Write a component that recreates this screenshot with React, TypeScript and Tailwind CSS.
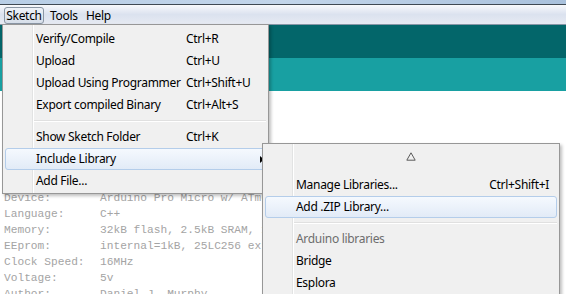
import React from "react";

type Item = { label: string; shortcut?: string; active?: boolean; sep?: boolean; arrow?: boolean; muted?: boolean };

const sketchItems: Item[] = [
  { label: "Verify/Compile", shortcut: "Ctrl+R" },
  { label: "Upload", shortcut: "Ctrl+U" },
  { label: "Upload Using Programmer", shortcut: "Ctrl+Shift+U" },
  { label: "Export compiled Binary", shortcut: "Ctrl+Alt+S" },
  { label: "", sep: true },
  { label: "Show Sketch Folder", shortcut: "Ctrl+K" },
  { label: "Include Library", active: true, arrow: true },
  { label: "Add File..." },
];

const libraryItems: Item[] = [
  { label: "Manage Libraries...", shortcut: "Ctrl+Shift+I" },
  { label: "Add .ZIP Library...", active: true },
  { label: "", sep: true },
  { label: "Arduino libraries", muted: true },
  { label: "Bridge" },
  { label: "Esplora" },
];

const details = [
  ["Device:", "Arduino Pro Micro w/ ATmega32U4"],
  ["Language:", "C++"],
  ["Memory:", "32kB flash, 2.5kB SRAM, 1kB EEPROM"],
  ["EEprom:", "internal=1kB, 25LC256 external"],
  ["Clock Speed:", "16MHz"],
  ["Voltage:", "5v"],
  ["Author:", "Daniel J. Murphy"],
];

function MenuRow({ item, shortcutCol }: { item: Item; shortcutCol: boolean }) {
  if (item.sep) {
    return (
      <div className="flex h-[10px] items-center pl-[30px] pr-[2px]">
        <div className="h-[2px] w-full border-t border-b border-t-[#e0e0e0] border-b-white" />
      </div>
    );
  }
  return (
    <div
      className={`relative mx-[2px] flex h-[22px] items-center rounded-[3px] border ${
        item.active
          ? "border-[#b4cdea] bg-gradient-to-b from-[#f5f9fe] to-[#e2ebf7]"
          : "border-transparent"
      }`}
    >
      <span
        className={`pl-[30px] whitespace-nowrap ${shortcutCol ? "w-[180px] shrink-0" : "flex-1"} ${
          item.muted ? "text-[#6d6d6d]" : "text-black"
        }`}
      >
        {item.label}
      </span>
      {item.shortcut && (
        <span className={`whitespace-nowrap ${shortcutCol ? "" : "pr-[7px]"}`}>{item.shortcut}</span>
      )}
      {item.arrow && (
        <svg className="absolute right-[1px] top-[7px]" width="4" height="7" viewBox="0 0 4 7">
          <path d="M0 0 L4 3.5 L0 7 Z" fill="#000" />
        </svg>
      )}
    </div>
  );
}

function Gutter() {
  return <div className="absolute left-[29px] top-0 bottom-0 w-[2px] border-l border-r border-l-[#e2e3e3] border-r-white" />;
}

export default function App() {
  return (
    <div
      className="relative h-[294px] w-[566px] overflow-hidden bg-white text-[12px] tracking-[-0.3px] text-black"
      style={{ fontFamily: '"Noto Sans", "Open Sans", sans-serif' }}
    >
      {/* window chrome */}
      <div className="h-[4px] bg-gradient-to-r from-[#b8cee6] via-[#c2d5ea] to-[#a9c1dc]" />
      <div className="h-[1px] bg-[#3f4953]" />
      <div className="flex h-[20px] items-start border-b border-[#8796a6] bg-gradient-to-b from-[#f8f9fc] via-[#dbe2ef] to-[#e6eaf2] pl-[4px]">
        <div className="mt-[2px] flex h-[17px] w-[40px] items-center justify-center rounded-[3px] border border-[#8a96a4] bg-gradient-to-b from-[#eef2f8] to-[#d6dee9]">
          Sketch
        </div>
        <div className="mt-[2px] ml-[6px] flex h-[17px] w-[36px] items-center">Tools</div>
        <div className="mt-[2px] flex h-[17px] items-center">Help</div>
      </div>

      {/* toolbar bands */}
      <div className="h-[33px] bg-[#03666a]" />
      <div className="h-[33px] bg-[#18a0a2]" />

      {/* sketch description */}
      <div
        className="flex flex-col pl-[4px] pt-[99px] text-[11.2px] leading-[16px] tracking-normal text-[#a4a4a4]"
        style={{ fontFamily: '"Liberation Mono", monospace' }}
      >
        {details.map(([k, v]) => (
          <div key={k} className="flex whitespace-nowrap">
            <span className="w-[96px] shrink-0">{k}</span>
            <span>{v}</span>
          </div>
        ))}
      </div>

      {/* Sketch menu */}
      <div className="absolute left-[2px] top-[24px] w-[267px] border border-[#979797] bg-[#f0f0f0] pt-[3px] pb-[1px] shadow-[2px_2px_3px_rgba(0,0,0,0.25)]">
        <Gutter />
        {sketchItems.map((it, i) => (
          <MenuRow key={i} item={it} shortcutCol />
        ))}
      </div>

      {/* Include Library submenu */}
      <div className="absolute left-[262px] top-[143px] h-[160px] w-[298px] border border-[#979797] bg-[#f0f0f0] shadow-[2px_2px_3px_rgba(0,0,0,0.25)]">
        <Gutter />
        <div className="flex h-[30px] justify-center pt-[8px]">
          <svg width="10" height="9" viewBox="0 0 10 9">
            <path d="M5 0.8 L9.2 8.2 L0.8 8.2 Z" fill="none" stroke="#5a5a5a" strokeWidth="1" />
          </svg>
        </div>
        {libraryItems.map((it, i) => (
          <MenuRow key={i} item={it} shortcutCol={false} />
        ))}
      </div>
    </div>
  );
}
